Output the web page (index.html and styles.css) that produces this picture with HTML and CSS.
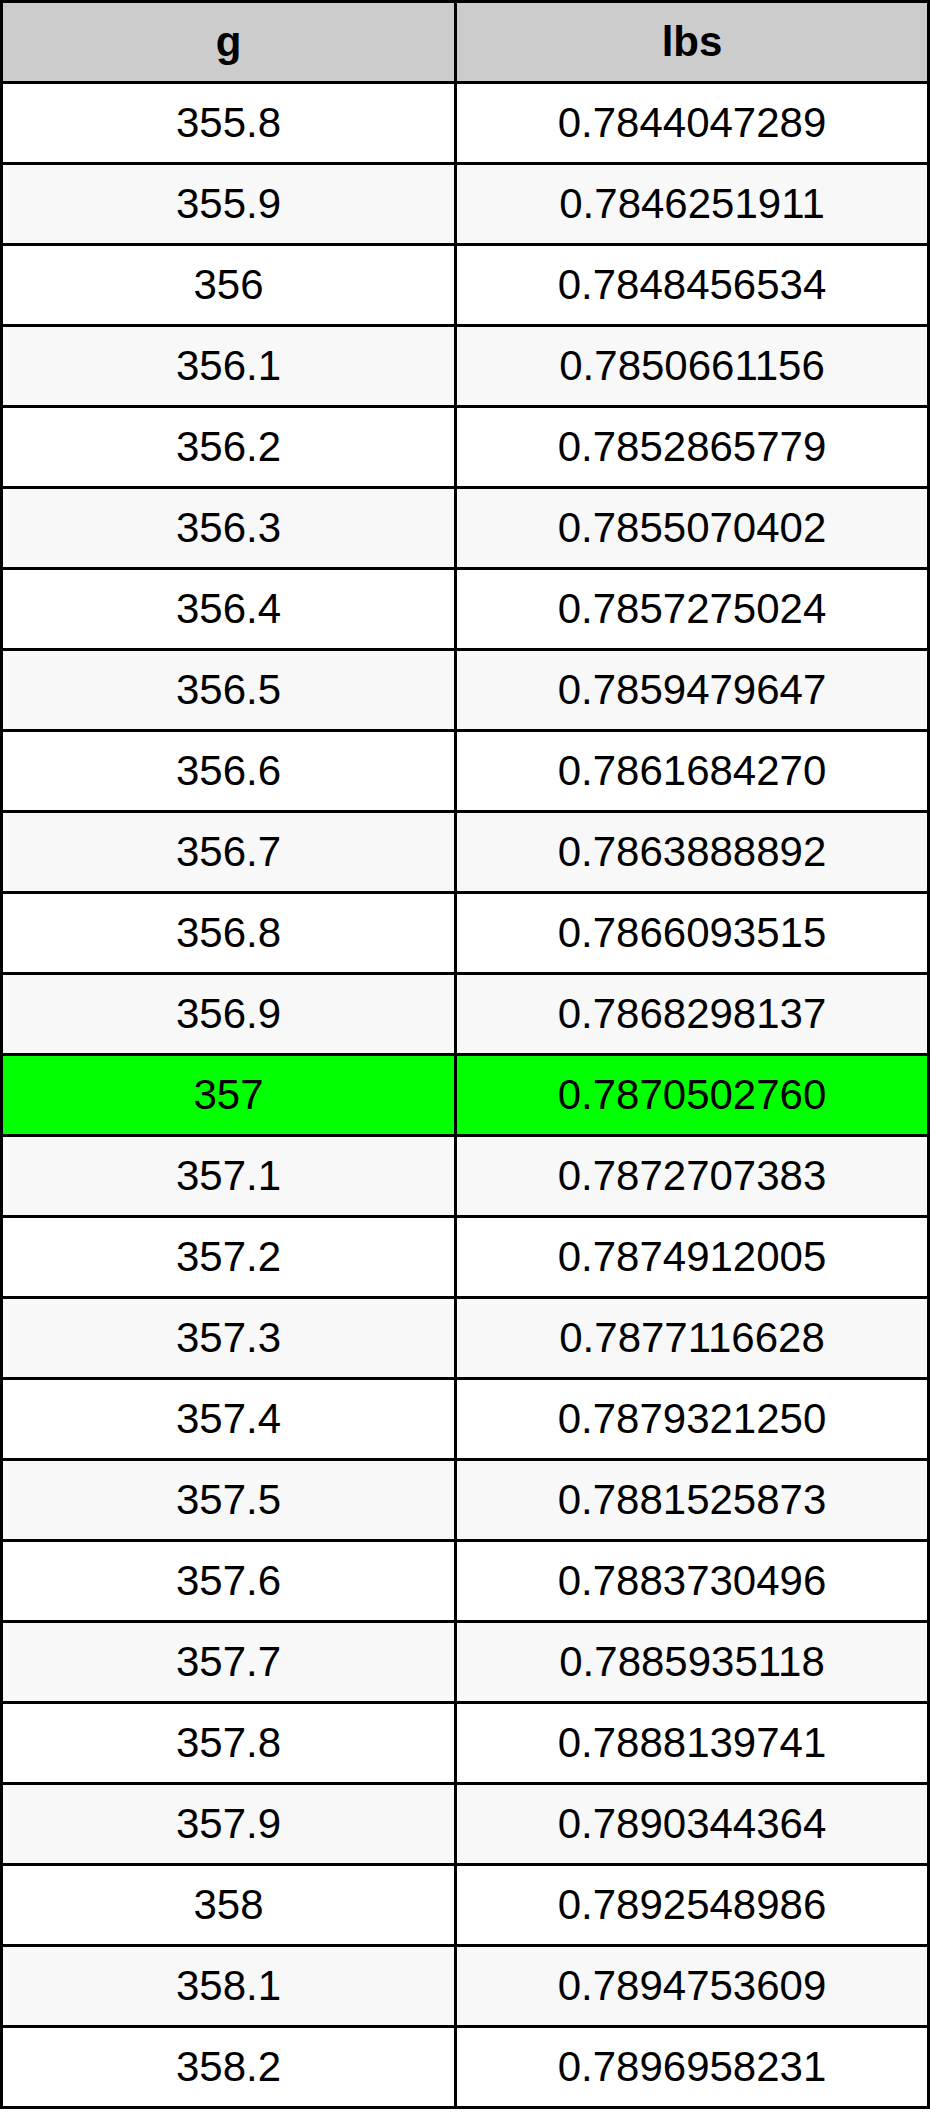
FILE: index.html
```html
<!DOCTYPE html>
<html lang="en">
<head>
<meta charset="utf-8">
<title>g to lbs</title>
<link rel="stylesheet" href="styles.css">
</head>
<body>
<table class="conv">
<thead>
<tr><th class="col-a">g</th><th class="col-b">lbs</th></tr>
</thead>
<tbody>
<tr><td>355.8</td><td>0.7844047289</td></tr>
<tr class="alt"><td>355.9</td><td>0.7846251911</td></tr>
<tr><td>356</td><td>0.7848456534</td></tr>
<tr class="alt"><td>356.1</td><td>0.7850661156</td></tr>
<tr><td>356.2</td><td>0.7852865779</td></tr>
<tr class="alt"><td>356.3</td><td>0.7855070402</td></tr>
<tr><td>356.4</td><td>0.7857275024</td></tr>
<tr class="alt"><td>356.5</td><td>0.7859479647</td></tr>
<tr><td>356.6</td><td>0.7861684270</td></tr>
<tr class="alt"><td>356.7</td><td>0.7863888892</td></tr>
<tr><td>356.8</td><td>0.7866093515</td></tr>
<tr class="alt"><td>356.9</td><td>0.7868298137</td></tr>
<tr class="hl"><td>357</td><td>0.7870502760</td></tr>
<tr class="alt"><td>357.1</td><td>0.7872707383</td></tr>
<tr><td>357.2</td><td>0.7874912005</td></tr>
<tr class="alt"><td>357.3</td><td>0.7877116628</td></tr>
<tr><td>357.4</td><td>0.7879321250</td></tr>
<tr class="alt"><td>357.5</td><td>0.7881525873</td></tr>
<tr><td>357.6</td><td>0.7883730496</td></tr>
<tr class="alt"><td>357.7</td><td>0.7885935118</td></tr>
<tr><td>357.8</td><td>0.7888139741</td></tr>
<tr class="alt"><td>357.9</td><td>0.7890344364</td></tr>
<tr><td>358</td><td>0.7892548986</td></tr>
<tr class="alt"><td>358.1</td><td>0.7894753609</td></tr>
<tr><td>358.2</td><td>0.7896958231</td></tr>
</tbody>
</table>
</body>
</html>
```
FILE: styles.css
```css
html, body {
  margin: 0;
  padding: 0;
  background: #ffffff;
}
.conv {
  width: 930px;
  border-collapse: separate;
  border-spacing: 0;
  border-top: 3px solid #000;
  border-left: 3px solid #000;
  table-layout: fixed;
  font-family: "Liberation Sans", Arial, Helvetica, sans-serif;
  font-size: 42px;
  color: #000;
}
.conv th, .conv td {
  box-sizing: border-box;
  height: 81px;
  padding: 0;
  text-align: center;
  vertical-align: middle;
  border-right: 3px solid #000;
  border-bottom: 3px solid #000;
  background: #ffffff;
}
.conv th {
  background: #cccccc;
  font-weight: bold;
  font-size: 42px;
}
.conv .col-a { width: 454px; }
.conv .col-b { width: 473px; }
.conv tr.alt td { background: #f8f8f8; }
.conv tr.hl td { background: #00ff00; }
```
